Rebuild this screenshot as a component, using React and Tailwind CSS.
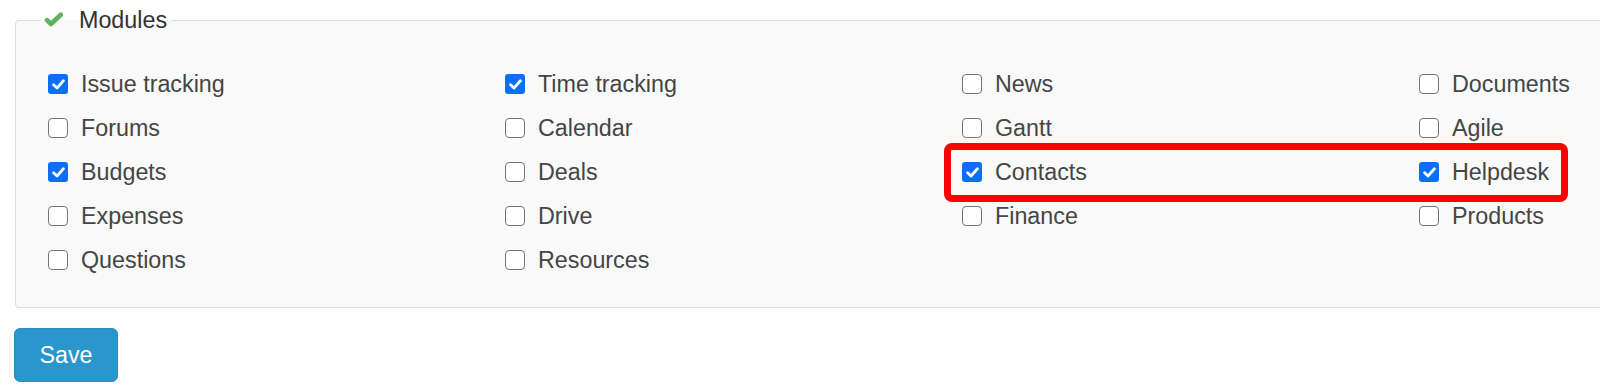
import React from 'react';

// Project settings: enabled modules.
const modules = [
  ['Issue tracking', true], ['Time tracking', true], ['News', false], ['Documents', false],
  ['Forums', false], ['Calendar', false], ['Gantt', false], ['Agile', false],
  ['Budgets', true], ['Deals', false], ['Contacts', true], ['Helpdesk', true],
  ['Expenses', false], ['Drive', false], ['Finance', false], ['Products', false],
  ['Questions', false], ['Resources', false],
];

function Box({ checked }) {
  return checked ? (
    <span className="w-[20px] h-[20px] rounded-[3px] bg-[#0b6ef8] flex items-center justify-center shrink-0">
      <svg width="13" height="11" viewBox="0 0 13 11">
        <path d="M1.6 5.8 L5 9 L11.4 1.8" fill="none" stroke="#fff" strokeWidth="2.8" strokeLinecap="round" strokeLinejoin="round" />
      </svg>
    </span>
  ) : (
    <span className="w-[20px] h-[20px] rounded-[4px] bg-white border-[1.5px] border-[#767676] shrink-0" />
  );
}

export default function App() {
  return (
    <div className="w-[1600px] h-[388px] overflow-hidden bg-white text-[#454545] font-['Liberation_Sans',Arial,sans-serif] relative">
      <div className="pl-[15px]">
        <fieldset className="w-[1620px] h-[299px] mt-[9px] border border-[#dcdcdc] rounded-[4px] bg-[#f9f9f9] p-0">
          <legend className="ml-[25px] pl-[3px] pr-[5px] flex items-center gap-[16px] text-[23.3px] leading-[22px] text-[#333]">
            <svg width="19" height="15" viewBox="0 0 19 15" className="mt-[-1px]">
              <path d="M3 8.2 L7 12 L16.8 2.8" fill="none" stroke="#5fb35b" strokeWidth="4.6" strokeLinecap="round" strokeLinejoin="round" />
            </svg>
            Modules
          </legend>
          <div className="grid grid-cols-[457px_457px_457px_457px] ml-[32px] mt-[31px]">
            {modules.map(([name, on]) => (
              <label key={name} className="h-[44px] flex items-center gap-[13px] text-[23.3px]">
                <Box checked={on} />
                <span>{name}</span>
              </label>
            ))}
          </div>
        </fieldset>
        <button className="mt-[20px] ml-[-1px] w-[104px] h-[54px] rounded-[6px] bg-[#2b96cc] border border-[#2a8ec2] text-white text-[23.3px]">
          Save
        </button>
      </div>
      {/* highlight annotation */}
      <div className="absolute left-[944px] top-[143px] w-[624px] h-[59px] border-[7px] border-[#ff0000] rounded-[8px]" />
    </div>
  );
}
